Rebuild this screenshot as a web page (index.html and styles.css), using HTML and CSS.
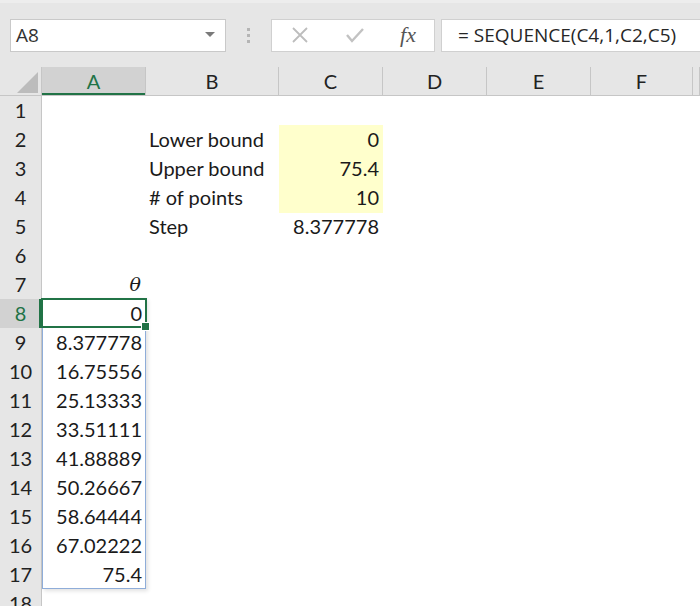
FILE: index.html
```html
<!DOCTYPE html>
<html lang="en">
  <head>
    <meta charset="UTF-8" />
    <title>SEQUENCE</title>
    <link rel="stylesheet" href="styles.css">
  </head>
  <body>
    <div class="toolbar">
      <div class="name-box">
        <span>A8</span>
        <svg class="drop" width="10" height="6" viewBox="0 0 10 6"><path d="M0 0h10L5 5z" fill="#7a7a7a"/></svg>
      </div>
      <div class="grip"><i></i><i></i><i></i></div>
      <div class="buttons">
        <svg width="18" height="18" viewBox="0 0 18 18"><path d="M2 2l14 14M16 2L2 16" stroke="#bdbdbd" stroke-width="1.8" fill="none"/></svg>
        <svg width="20" height="18" viewBox="0 0 20 18"><path d="M2 9l5 6L18 3" stroke="#c2c2c2" stroke-width="2.4" fill="none"/></svg>
        <span class="fx">fx</span>
      </div>
      <div class="formula">= SEQUENCE(C4,1,C2,C5)</div>
    </div>

    <div class="sheet">
      <div class="row head">
        <div class="corner"><svg width="42" height="28" viewBox="0 0 42 28"><path d="M17 26L38 5v21z" fill="#bcbcbc"/></svg></div>
        <div class="ch sel">A</div><div class="ch">B</div><div class="ch">C</div><div class="ch">D</div><div class="ch">E</div><div class="ch">F</div><div class="ch"></div>
      </div>
      <div class="row"><div class="rh">1</div></div>
      <div class="row"><div class="rh">2</div><div></div><div class="txt">Lower bound</div><div class="num fill">0</div></div>
      <div class="row"><div class="rh">3</div><div></div><div class="txt">Upper bound</div><div class="num fill">75.4</div></div>
      <div class="row"><div class="rh">4</div><div></div><div class="txt"># of points</div><div class="num fill">10</div></div>
      <div class="row"><div class="rh">5</div><div></div><div class="txt">Step</div><div class="num">8.377778</div></div>
      <div class="row"><div class="rh">6</div></div>
      <div class="row"><div class="rh">7</div><div class="num theta">θ</div></div>
      <div class="row"><div class="rh sel">8</div><div class="num">0</div></div>
      <div class="row"><div class="rh">9</div><div class="num">8.377778</div></div>
      <div class="row"><div class="rh">10</div><div class="num">16.75556</div></div>
      <div class="row"><div class="rh">11</div><div class="num">25.13333</div></div>
      <div class="row"><div class="rh">12</div><div class="num">33.51111</div></div>
      <div class="row"><div class="rh">13</div><div class="num">41.88889</div></div>
      <div class="row"><div class="rh">14</div><div class="num">50.26667</div></div>
      <div class="row"><div class="rh">15</div><div class="num">58.64444</div></div>
      <div class="row"><div class="rh">16</div><div class="num">67.02222</div></div>
      <div class="row"><div class="rh">17</div><div class="num">75.4</div></div>
      <div class="row"><div class="rh">18</div></div>

      <div class="spill"></div>
      <div class="active"><span class="handle"></span></div>
    </div>
  </body>
</html>
```

FILE: styles.css
```css
body {
  margin: 0;
  width: 700px;
  height: 606px;
  overflow: hidden;
  background: #fff;
  font-family: Lato, "Open Sans", sans-serif;
  color: #1a1a1a;
}
.toolbar {
  display: flex;
  align-items: center;
  height: 67px;
  background: #e6e6e6;
  border-top: 3px solid #ededed;
  box-sizing: border-box;
  padding-left: 10px;
}
.name-box {
  display: flex;
  align-items: center;
  justify-content: space-between;
  width: 216px;
  height: 33px;
  box-sizing: border-box;
  background: #fff;
  border: 1px solid #c9c9c9;
  padding: 0 10px 0 5px;
  font-family: "Open Sans", sans-serif;
  font-size: 19px;
  color: #333;
}
.grip {
  display: flex;
  flex-direction: column;
  gap: 3px;
  margin: 0 21px;
}
.grip i {
  width: 3px;
  height: 3px;
  background: #b5b5b5;
}
.buttons {
  display: flex;
  align-items: center;
  justify-content: space-between;
  width: 164px;
  height: 33px;
  box-sizing: border-box;
  background: #fff;
  border: 1px solid #d0d0d0;
  padding: 0 18px 0 19px;
}
.fx {
  font-family: "Liberation Serif", serif;
  font-style: italic;
  font-size: 22px;
  color: #555;
}
.formula {
  flex: 1;
  height: 33px;
  margin-left: 6px;
  box-sizing: border-box;
  background: #fff;
  border: 1px solid #d0d0d0;
  border-right: none;
  padding: 2px 0 0 16px;
  font-family: "Open Sans", sans-serif;
  font-size: 19px;
  color: #262626;
}
.sheet {
  position: relative;
}
.row {
  display: grid;
  grid-template-columns: 42px 104px 133px 104px 104px 104px 102px 1fr;
  height: 29px;
  font-size: 20px;
  line-height: 29px;
}
.row.head {
  height: 28px;
  line-height: 28px;
  background: #e6e6e6;
  border-bottom: 1px solid #c6c6c6;
}
.corner {
  border-right: 1px solid #c6c6c6;
}
.corner svg {
  display: block;
}
.ch {
  text-align: center;
  border-right: 1px solid #c6c6c6;
  font-size: 20px;
  color: #222;
}
.ch.sel {
  background: #d2d2d2;
  color: #217346;
  box-shadow: inset 0 -2px 0 #217346;
}
.rh {
  text-align: center;
  background: #e6e6e6;
  border-right: 1px solid #c6c6c6;
  border-bottom: 1px solid #d0d0d0;
  box-sizing: border-box;
  font-size: 20px;
  color: #222;
}
.rh.sel {
  background: #d2d2d2;
  color: #217346;
  box-shadow: inset -2px 0 0 #217346;
}
.txt {
  padding-left: 3px;
}
.num {
  text-align: right;
  padding-right: 4px;
}
.fill {
  background: #ffffcc;
}
.theta {
  font-family: "DejaVu Serif", serif;
  font-style: italic;
  font-size: 19px;
  padding-right: 5px;
}
.spill {
  position: absolute;
  left: 42px;
  top: 231px;
  width: 104px;
  height: 291px;
  box-sizing: border-box;
  border: 1px solid #8fadd9;
  box-shadow: 2px 2px 4px rgba(0, 0, 0, 0.12);
}
.active {
  position: absolute;
  left: 41px;
  top: 231px;
  width: 106px;
  height: 30px;
  box-sizing: border-box;
  border: 2px solid #217346;
}
.handle {
  position: absolute;
  right: -5px;
  bottom: -5px;
  width: 7px;
  height: 7px;
  background: #217346;
  border: 1px solid #fff;
}
```
